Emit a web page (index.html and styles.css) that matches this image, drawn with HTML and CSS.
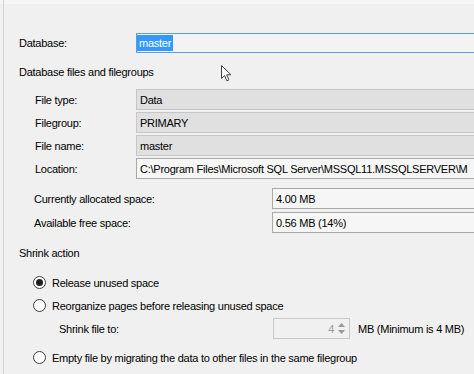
FILE: index.html
```html
<!DOCTYPE html>
<html>
<head>
<meta charset="utf-8">
<link rel="stylesheet" href="styles.css">
</head>
<body>
<div class="frame">
  <div class="row db-row">
    <span class="lbl lbl-db">Database:</span>
    <div class="field focus"><span class="sel">master</span></div>
  </div>

  <div class="heading h-files">Database files and filegroups</div>

  <div class="group files">
    <div class="row"><span class="lbl lbl-file">File type:</span><div class="field ro">Data</div></div>
    <div class="row"><span class="lbl lbl-file">Filegroup:</span><div class="field ro">PRIMARY</div></div>
    <div class="row"><span class="lbl lbl-file">File name:</span><div class="field ro">master</div></div>
    <div class="row"><span class="lbl lbl-file">Location:</span><div class="field val">C:\Program Files\Microsoft SQL Server\MSSQL11.MSSQLSERVER\M</div></div>
  </div>

  <div class="group space">
    <div class="row"><span class="lbl lbl-space">Currently allocated space:</span><div class="field val">4.00 MB</div></div>
    <div class="row"><span class="lbl lbl-space">Available free space:</span><div class="field val">0.56 MB (14%)</div></div>
  </div>

  <div class="heading h-shrink">Shrink action</div>

  <div class="radios">
    <div class="radio-row r1"><span class="radio checked"></span><span>Release unused space</span></div>
    <div class="radio-row"><span class="radio"></span><span>Reorganize pages before releasing unused space</span></div>
    <div class="shrink-row">
      <span class="lbl lbl-shrink">Shrink file to:</span>
      <div class="spin">
        <span class="spin-val">4</span>
        <span class="spin-btns">
          <svg width="7" height="4" viewBox="0 0 7 4"><path d="M0 4 L3.5 0 L7 4 Z" fill="#9a9a9a"/></svg>
          <svg width="7" height="4" viewBox="0 0 7 4"><path d="M0 0 L3.5 4 L7 0 Z" fill="#9a9a9a"/></svg>
        </span>
      </div>
      <span class="unit">MB (Minimum is 4 MB)</span>
    </div>
    <div class="radio-row r4"><span class="radio"></span><span>Empty file by migrating the data to other files in the same filegroup</span></div>
  </div>
</div>

<svg class="cursor" width="12" height="17" viewBox="0 0 12 17">
  <path d="M0.5 0.5 L0.5 13.5 L3.6 10.6 L5.8 15.8 L7.9 14.9 L5.7 9.8 L10 9.8 Z" fill="#ffffff" stroke="#444" stroke-width="1" stroke-linejoin="round"/>
</svg>
</body>
</html>
```

FILE: styles.css
```css
html, body {
  margin: 0;
  padding: 0;
  background: #f0f0f0;
  overflow: hidden;
  width: 474px;
  height: 374px;
}

body {
  font-family: "Liberation Sans", Arial, sans-serif;
  font-size: 11px;
  letter-spacing: -0.25px;
  color: #000;
  position: relative;
  background: linear-gradient(#f6f6f6, #f6f6f6) 0 0 / 100% 4px no-repeat, #f0f0f0;
}

.frame {
  margin-left: 3px;
  border-left: 1px solid #d3d3d3;
  height: 374px;
  width: 720px;
  padding: 33px 0 0 15px;
  box-sizing: border-box;
  display: flex;
  flex-direction: column;
}

.row {
  display: flex;
  align-items: center;
  height: 21px;
}

.lbl {
  flex: none;
  white-space: nowrap;
}

.lbl-db { width: 117px; }
.lbl-file { width: 101px; }
.lbl-space { width: 238px; }

.field {
  flex: 1;
  height: 21px;
  box-sizing: border-box;
  display: flex;
  align-items: center;
  white-space: nowrap;
  overflow: hidden;
  padding-left: 3px;
}

.db-row { height: 20px; }

.field.focus {
  height: 20px;
  border: 1px solid #5a9fe6;
  background: #f3f3f3;
  padding-left: 0;
}

.sel {
  background: #3399ff;
  color: #fff;
  padding: 1px 2px 1px 2px;
  line-height: 14px;
}

.field.ro {
  background: #e0e0e0;
  border: 1px solid #c6c6c6;
}

.field.val {
  background: #f6f6f6;
  border: 1px solid #a9a9a9;
}

.heading {
  line-height: 16px;
  height: 16px;
}

.h-files { margin-top: 11px; }
.h-shrink { margin-top: 12px; }

.group {
  display: flex;
  flex-direction: column;
}

.files {
  margin-top: 9px;
  padding-left: 16px;
  gap: 2px;
}

.space {
  margin-top: 9px;
  padding-left: 15px;
  gap: 3px;
}

.radios {
  display: flex;
  flex-direction: column;
  margin-top: 10px;
}

.radio-row {
  display: flex;
  align-items: center;
  height: 23px;
  padding-left: 14px;
  gap: 6px;
  white-space: nowrap;
}

.r4 { margin-top: 6px; }

.radio {
  width: 13px;
  height: 13px;
  box-sizing: border-box;
  border: 1px solid #3c3c3c;
  border-radius: 50%;
  background: #fff;
  display: flex;
  align-items: center;
  justify-content: center;
  flex: none;
}

.radio.checked::after {
  content: "";
  width: 7px;
  height: 7px;
  border-radius: 50%;
  background: #1f1f1f;
}

.shrink-row {
  display: flex;
  align-items: center;
  height: 23px;
  padding-left: 40px;
  white-space: nowrap;
}

.lbl-shrink { width: 214px; }

.spin {
  width: 77px;
  height: 21px;
  box-sizing: border-box;
  border: 1px solid #c8c8c8;
  background: #f0f0f0;
  display: flex;
  align-items: center;
  flex: none;
}

.spin-val {
  flex: 1;
  text-align: right;
  color: #9a9a9a;
  padding-right: 2px;
}

.spin-btns {
  width: 10px;
  display: flex;
  flex-direction: column;
  align-items: center;
  gap: 3px;
  margin-right: 3px;
}

.spin-btns svg { display: block; }

.unit {
  margin-left: 8px;
}

.cursor {
  position: absolute;
  left: 221px;
  top: 65px;
}
```
